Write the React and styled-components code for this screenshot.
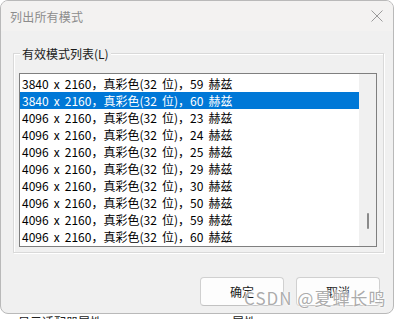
import React from "react";
import styled, { createGlobalStyle } from "styled-components";

const Global = createGlobalStyle`
  html, body { margin: 0; padding: 0; background: #ffffff; overflow: hidden; }
  body { width: 396px; height: 319px; font-family: "Noto Sans CJK SC", "Noto Sans", sans-serif; }
  #root { position: relative; width: 396px; height: 319px; overflow: hidden; }
`;

const Window = styled.div`
  box-sizing: border-box;
  width: 394px;
  height: 314px;
  border: 1px solid #b9b9b9;
  border-radius: 8px;
  overflow: hidden;
  background: #f0f0f0;
  display: flex;
  flex-direction: column;
`;

const TitleBar = styled.div`
  height: 30px;
  flex: none;
  background: #f3f2f1;
  display: flex;
  align-items: center;
  justify-content: space-between;
  padding: 0 6px 0 9px;
`;

const Title = styled.span`
  font-size: 12px;
  color: #8c8c8c;
  letter-spacing: 0.2px;
`;

const CloseBtn = styled.div`
  width: 20px;
  height: 20px;
  display: flex;
  align-items: center;
  justify-content: center;
`;

const Body = styled.div`
  flex: 1;
  display: flex;
  flex-direction: column;
  padding: 22px 9px 0 12px;
`;

const GroupBox = styled.div`
  position: relative;
  box-sizing: border-box;
  width: 371px;
  height: 200px;
  border: 1px solid #d9d9d9;
  box-shadow: inset 1px 1px 0 #ffffff, 1px 1px 0 #ffffff;
  padding: 19px 6px 4px 5px;
`;

const GroupLabel = styled.span`
  position: absolute;
  left: 6px;
  top: -8px;
  padding: 0 2px;
  background: #f0f0f0;
  font-size: 12px;
  line-height: 16px;
  color: #1a1a1a;
`;

const ListBox = styled.div`
  box-sizing: border-box;
  height: 174px;
  border: 1px solid #7f7f7f;
  background: #ffffff;
  display: flex;
`;

const Rows = styled.div`
  flex: 1;
  padding-top: 1px;
  display: flex;
  flex-direction: column;
`;

const Row = styled.div`
  height: 17px;
  line-height: 17px;
  font-size: 12px;
  padding-left: 2px;
  white-space: nowrap;
  word-spacing: 2.4px;
  color: ${(p) => (p.$selected ? "#ffffff" : "#000000")};
  background: ${(p) => (p.$selected ? "#0078d7" : "transparent")};
`;

const ScrollTrack = styled.div`
  width: 17px;
  flex: none;
  background: #f0f0f0;
  display: flex;
  flex-direction: column;
  align-items: center;
  padding-top: 139px;
  box-sizing: border-box;
`;

const Thumb = styled.div`
  width: 2px;
  height: 16px;
  border-radius: 1px;
  background: #8a8a8a;
`;

const Footer = styled.div`
  display: flex;
  justify-content: flex-end;
  gap: 12px;
  padding: 24px 4px 0 0;
`;

const Button = styled.div`
  box-sizing: border-box;
  width: 84px;
  height: 29px;
  border: 1px solid #d0d0d0;
  border-bottom-color: #c2c2c2;
  border-radius: 4px;
  background: #fdfdfd;
  display: flex;
  align-items: center;
  justify-content: center;
  font-size: 12px;
  color: #1a1a1a;
`;

const Backdrop = styled.div`
  display: flex;
  gap: 130px;
  padding-left: 18px;
  margin-top: 2px;
  font-size: 12px;
  line-height: 12px;
  color: #222;
`;

const Watermark = styled.div`
  position: absolute;
  left: 244px;
  top: 287px;
  font-size: 17px;
  line-height: 22px;
  letter-spacing: 1px;
  color: rgba(150, 150, 150, 0.8);
  text-shadow: 0 0 1px #fff, 0 0 2px #fff, 0 0 3px #fff;
  white-space: nowrap;
  pointer-events: none;
`;

const modes = [
  ["3840", "59"],
  ["3840", "60"],
  ["4096", "23"],
  ["4096", "24"],
  ["4096", "25"],
  ["4096", "29"],
  ["4096", "30"],
  ["4096", "50"],
  ["4096", "59"],
  ["4096", "60"],
];

export default function App() {
  return (
    <>
      <Global />
      <Window>
        <TitleBar>
          <Title>列出所有模式</Title>
          <CloseBtn>
            <svg width="12" height="12" viewBox="0 0 12 12">
              <path d="M0.5 0.5 L11.5 11.5 M11.5 0.5 L0.5 11.5" stroke="#9a9a9a" strokeWidth="1" fill="none" />
            </svg>
          </CloseBtn>
        </TitleBar>
        <Body>
          <GroupBox>
            <GroupLabel>有效模式列表(L)</GroupLabel>
            <ListBox>
              <Rows>
                {modes.map(([w, hz], i) => (
                  <Row key={i} $selected={i === 1}>
                    {w} x 2160，真彩色(32 位)，{hz} 赫兹
                  </Row>
                ))}
              </Rows>
              <ScrollTrack>
                <Thumb />
              </ScrollTrack>
            </ListBox>
          </GroupBox>
          <Footer>
            <Button>确定</Button>
            <Button>取消</Button>
          </Footer>
        </Body>
      </Window>
      <Backdrop>
        <span>显示适配器属性</span>
        <span>属性</span>
      </Backdrop>
      <Watermark>CSDN @夏蝉长鸣</Watermark>
    </>
  );
}
